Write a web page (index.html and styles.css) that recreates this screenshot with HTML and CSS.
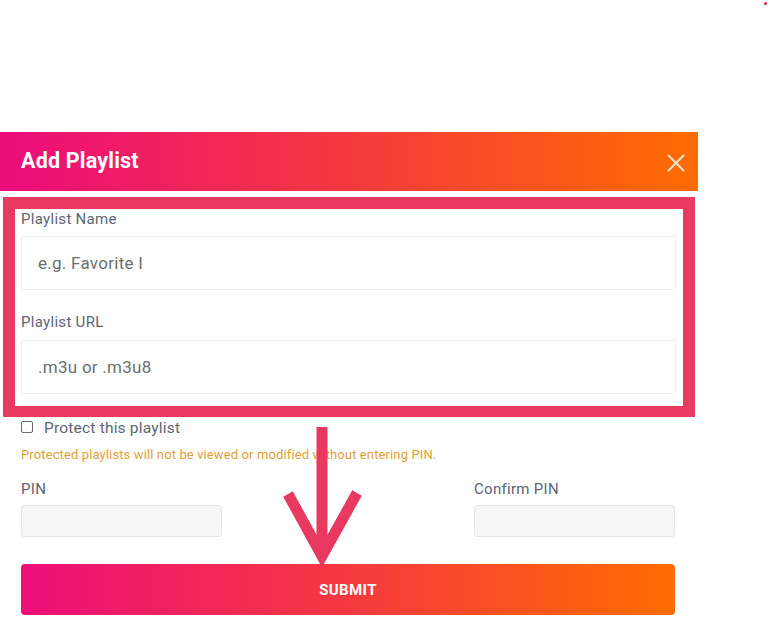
FILE: index.html
```html
<!DOCTYPE html>
<html lang="en">
<head>
<meta charset="utf-8">
<title>Add Playlist</title>
<link rel="stylesheet" href="styles.css">
</head>
<body>
<span class="dot"></span>
<div class="modal">
  <div class="modal-header">
    <h1 class="title">Add Playlist</h1>
    <svg class="close" width="18" height="18" viewBox="0 0 18 18" aria-hidden="true">
      <path d="M1.5 1.5 L16.5 16.5 M16.5 1.5 L1.5 16.5" stroke="#ffe4c8" stroke-width="2" stroke-linecap="round" fill="none"/>
    </svg>
  </div>
  <div class="highlight">
    <label class="label">Playlist Name</label>
    <div class="text-input">e.g. Favorite I</div>
    <label class="label label-second">Playlist URL</label>
    <div class="text-input text-input-second">.m3u or .m3u8</div>
  </div>
  <div class="body">
    <div class="check-row">
      <span class="checkbox"></span>
      <span class="check-text">Protect this playlist</span>
    </div>
    <p class="warning">Protected playlists will not be viewed or modified without entering PIN.</p>
    <div class="pin-row">
      <div class="pin-field">
        <label class="label">PIN</label>
        <div class="pin-input"></div>
      </div>
      <div class="pin-field">
        <label class="label">Confirm PIN</label>
        <div class="pin-input"></div>
      </div>
    </div>
    <button class="submit">SUBMIT</button>
  </div>
</div>
<svg class="arrow" width="100" height="150" viewBox="0 0 100 150" aria-hidden="true">
  <path d="M52 7 L52 134" stroke="#e83a60" stroke-width="11" fill="none"/>
  <path d="M18 74 L52 136 L87 73" stroke="#e83a60" stroke-width="11" stroke-linejoin="miter" fill="none"/>
</svg>
</body>
</html>
```
FILE: styles.css
```css
* { box-sizing: border-box; }
html, body { margin: 0; padding: 0; background: #ffffff; }
body {
  font-family: Roboto, "Liberation Sans", Arial, sans-serif;
  width: 768px;
  height: 618px;
  overflow: hidden;
  position: relative;
}
.dot {
  position: absolute;
  left: 764px;
  top: 2px;
  width: 3px;
  height: 3px;
  border-radius: 50%;
  background: #d3243f;
}
.modal {
  width: 698px;
  margin-top: 132px;
}
.modal-header {
  height: 59px;
  background: linear-gradient(90deg, #ec0c7c 0%, #f5393e 50%, #ff6c00 100%);
  display: flex;
  align-items: center;
  justify-content: space-between;
  padding: 0 13px 0 21px;
}
.title {
  margin: 0;
  color: #ffffff;
  font-size: 21.5px;
  letter-spacing: 0.2px;
  font-weight: 700;
  line-height: 24px;
  padding-bottom: 1px;
}
.close { display: block; margin-top: 2px; }
.highlight {
  margin: 6px 3px 0 3px;
  width: 692px;
  border: 12px solid #e83a60;
  border-bottom-width: 11px;
  padding: 0 7px 12px 6px;
}
.label {
  display: block;
  font-size: 15px;
  letter-spacing: 0.3px;
  line-height: 20px;
  color: #5d6573;
}
.label-second { margin-top: 22px; }
.text-input {
  margin-top: 7px;
  height: 54px;
  border: 1px solid #efefef;
  border-radius: 2px;
  background: #fff;
  padding-left: 16px;
  font-size: 17px;
  letter-spacing: 0.27px;
  line-height: 52px;
  color: #6e6e6e;
}
.text-input-second { margin-top: 8px; }
.body {
  padding: 1px 23px 0 21px;
}
.check-row {
  display: flex;
  align-items: center;
  height: 20px;
}
.checkbox {
  width: 12px;
  height: 12px;
  border: 1px solid #6a6a6a;
  border-radius: 2px;
  background: #fff;
  margin-right: 11px;
  margin-top: -3px;
  flex: none;
}
.check-text {
  font-size: 15.5px;
  letter-spacing: 0.2px;
  color: #5d6573;
  line-height: 20px;
}
.warning {
  margin: 8px 0 0 0;
  font-size: 13px;
  letter-spacing: 0.12px;
  line-height: 18px;
  color: #e0a136;
}
.pin-row {
  margin-top: 15px;
  display: flex;
  justify-content: space-between;
}
.pin-field { width: 201px; }
.pin-input {
  margin-top: 6px;
  height: 32px;
  border: 1px solid #e6e6e6;
  border-radius: 3px;
  background: #f6f6f6;
}
.submit {
  display: block;
  margin-top: 27px;
  width: 654px;
  height: 51px;
  border: none;
  border-radius: 4px;
  background: linear-gradient(90deg, #ee0e7a 0%, #f5393f 50%, #ff6c00 100%);
  color: #ffffff;
  font-family: Roboto, "Liberation Sans", Arial, sans-serif;
  font-size: 15px;
  font-weight: 700;
  letter-spacing: 0.4px;
  padding: 0;
}
.arrow {
  position: absolute;
  left: 270px;
  top: 420px;
}
```
